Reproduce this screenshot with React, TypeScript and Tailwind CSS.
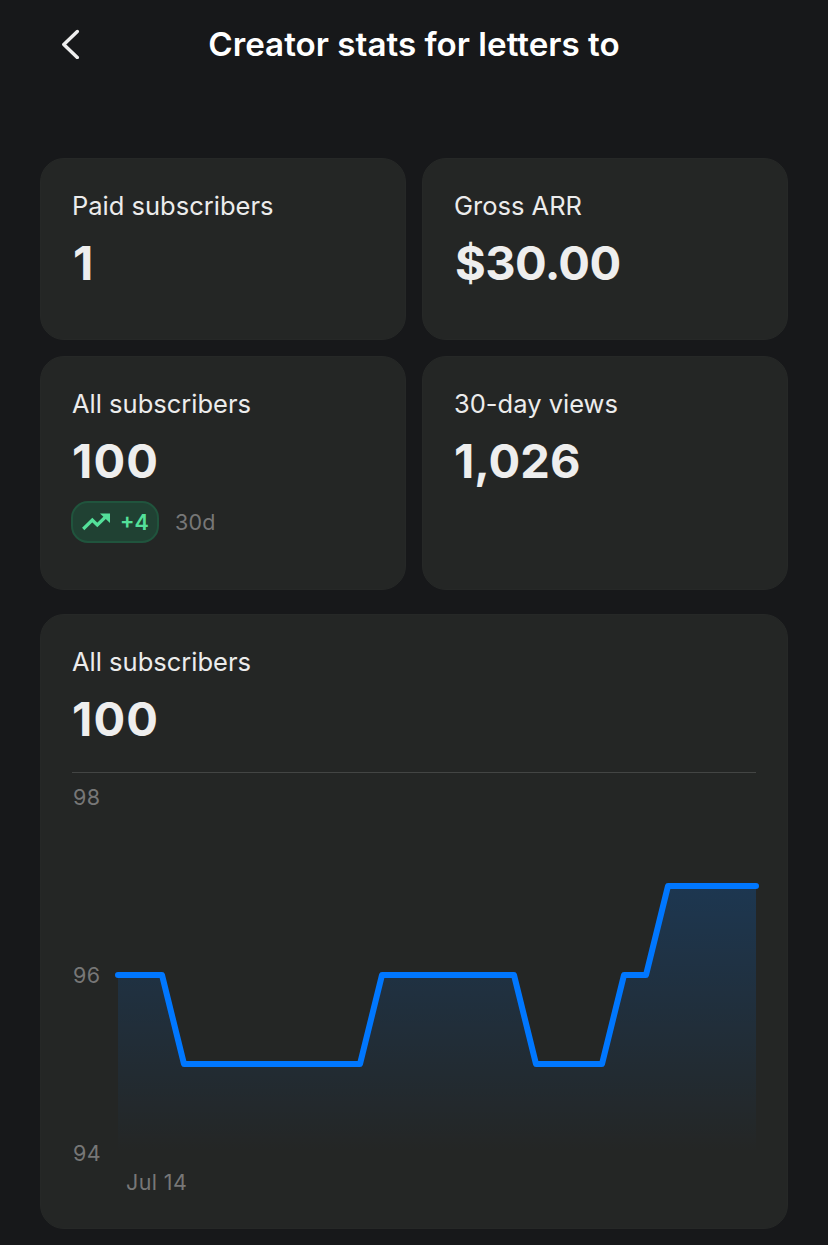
import React from 'react';

interface StatProps {
    label: string;
    value: string;
    valueClass?: string;
    children?: React.ReactNode;
}

// One entry per day, the axis goes from 94 to 98
const subscribers = [
    96, 96, 96, 95, 95, 95, 95, 95, 95, 95, 95, 95, 96, 96, 96,
    96, 96, 96, 96, 95, 95, 95, 95, 96, 96, 97, 97, 97, 97, 97,
];

const CHART_WIDTH = 638;
const CHART_HEIGHT = 356;
const MIN = 94;
const MAX = 98;

const StatHeading = ({ label, value, valueClass = '' }: StatProps) => (
    <>
        <div className="text-[25.5px] leading-8 text-[#ececec]">{label}</div>
        <div className={`mt-[13px] text-[47px] leading-[56px] font-bold text-[#eeeeee] ${valueClass}`}>{value}</div>
    </>
);

const StatCard = ({ label, value, valueClass, children }: StatProps) => (
    <div className="rounded-3xl border border-[#262827] bg-[#242625] px-[31px] pt-[31px]">
        <StatHeading label={label} value={value} valueClass={valueClass} />
        {children}
    </div>
);

const TrendBadge = ({ value }: { value: string }) => (
    <div className="flex h-[42px] w-[88px] items-center rounded-[17px] border-2 border-[#20543d] bg-[#204133] pl-[9px] text-[#54e09a]">
        <svg width="29" height="18" viewBox="0 0 29 18" fill="none">
            <path d="M1.2 16 L10.3 7 L15.3 12 L24 3.5" stroke="currentColor" strokeWidth="3.2" />
            <path d="M18 0.5 H28 V10 Z" fill="currentColor" />
        </svg>
        <span className="ml-[9px] text-[21.5px] leading-7 font-semibold">{value}</span>
    </div>
);

const SubscribersChart = () => {
    const points = subscribers.map((count, i) => {
        const x = (i * CHART_WIDTH) / (subscribers.length - 1);
        const y = ((MAX - count) / (MAX - MIN)) * CHART_HEIGHT;
        return `${x},${y}`;
    });
    const line = `M${points.join(' L')}`;

    return (
        <svg
            className="my-4 overflow-visible"
            width={CHART_WIDTH}
            height={CHART_HEIGHT}
            viewBox={`0 0 ${CHART_WIDTH} ${CHART_HEIGHT}`}
            fill="none"
        >
            <defs>
                <linearGradient id="area" x1="0" y1="89" x2="0" y2="356" gradientUnits="userSpaceOnUse">
                    <stop offset="0" stopColor="#007aff" stopOpacity="0.2" />
                    <stop offset="1" stopColor="#007aff" stopOpacity="0" />
                </linearGradient>
            </defs>
            <path d={`${line} V${CHART_HEIGHT} H0 Z`} fill="url(#area)" />
            <path d={line} stroke="#0077ff" strokeWidth="6" strokeLinecap="round" strokeLinejoin="round" />
        </svg>
    );
};

const App: React.FC = () => {
    return (
        <div className="h-[1245px] w-[828px] overflow-hidden bg-[#17181a] px-10 font-['Inter',sans-serif]">
            <header className="grid h-[158px] grid-cols-[60px_1fr_60px] items-start pt-[19px]">
                <button className="flex h-[50px] items-center pl-[21px]" aria-label="Back">
                    <svg width="19" height="30" viewBox="0 0 19 30" fill="none">
                        <path
                            d="M16.3 2.5 L2.8 15.5 L16.3 28.5"
                            stroke="#eeeeee"
                            strokeWidth="3.4"
                            strokeLinecap="round"
                            strokeLinejoin="round"
                        />
                    </svg>
                </button>
                <h1 className="text-center text-[33.2px] leading-[50px] font-semibold whitespace-nowrap text-white">
                    Creator stats for letters to
                </h1>
            </header>

            <div className="grid grid-cols-2 grid-rows-[182px_234px] gap-4">
                <StatCard label="Paid subscribers" value="1" valueClass="pl-px" />
                <StatCard label="Gross ARR" value="$30.00" valueClass="pl-px tracking-[-0.6px]" />
                <StatCard label="All subscribers" value="100" valueClass="tracking-[1.2px]">
                    <div className="mt-3 -ml-px flex items-center">
                        <TrendBadge value="+4" />
                        <span className="ml-4 text-[21.5px] tracking-[0.2px] text-[#777777]">30d</span>
                    </div>
                </StatCard>
                <StatCard label="30-day views" value="1,026" />
            </div>

            <section className="mt-6 h-[615px] rounded-3xl border border-[#262827] bg-[#242625] px-[31px] pt-[31px]">
                <StatHeading label="All subscribers" value="100" valueClass="tracking-[1.2px]" />
                <div className="mt-[25px] h-px bg-[#434544]" />
                <div className="mt-2 flex h-[388px] text-[21.5px] leading-8 tracking-[0.5px] text-[#777777]">
                    <div className="flex w-[46px] shrink-0 flex-col justify-between pl-px">
                        <span>98</span>
                        <span>96</span>
                        <span>94</span>
                    </div>
                    <SubscribersChart />
                </div>
                <div className="-mt-[3px] pl-[54px] text-[21.5px] leading-8 tracking-[0.4px] text-[#777777]">Jul 14</div>
            </section>
        </div>
    );
};

export default App;
